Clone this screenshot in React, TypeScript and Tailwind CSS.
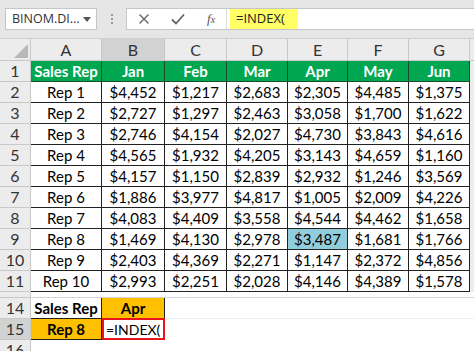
import React from "react";

const cols = [
  { k: "A", w: "w-[71px]" },
  { k: "B", w: "w-[63px]" },
  { k: "C", w: "w-[62px]" },
  { k: "D", w: "w-[61px]" },
  { k: "E", w: "w-[60px]" },
  { k: "F", w: "w-[61px]" },
  { k: "G", w: "w-[61px]" },
];

const data: string[][] = [
  ["Rep 1", "$4,452", "$1,217", "$2,683", "$2,305", "$4,485", "$1,375"],
  ["Rep 2", "$2,727", "$1,297", "$2,463", "$3,058", "$1,700", "$1,622"],
  ["Rep 3", "$2,746", "$4,154", "$2,027", "$4,730", "$3,843", "$4,616"],
  ["Rep 4", "$4,565", "$1,932", "$4,205", "$3,143", "$4,659", "$1,160"],
  ["Rep 5", "$4,157", "$1,150", "$2,839", "$2,932", "$1,246", "$3,569"],
  ["Rep 6", "$1,886", "$3,977", "$4,817", "$1,005", "$2,009", "$4,226"],
  ["Rep 7", "$4,083", "$4,409", "$3,558", "$4,544", "$4,462", "$1,658"],
  ["Rep 8", "$1,469", "$4,130", "$2,978", "$3,487", "$1,681", "$1,766"],
  ["Rep 9", "$2,403", "$4,369", "$2,271", "$1,147", "$2,372", "$4,856"],
  ["Rep 10", "$2,993", "$2,251", "$2,028", "$4,146", "$4,389", "$1,578"],
];

const headers = ["Sales Rep", "Jan", "Feb", "Mar", "Apr", "May", "Jun"];

function RowHead({ n, sel }: { n: string; sel?: boolean }) {
  return (
    <div
      className={`w-[31px] shrink-0 flex items-center justify-center border-r border-b border-[#c8c8c8] text-[16px] text-[#333] whitespace-nowrap ${
        sel ? "bg-[#d2d2d2]" : "bg-[#ececec]"
      }`}
    >
      {n}
    </div>
  );
}

export default function App() {
  return (
    <div
      className="w-[474px] h-[351px] overflow-hidden bg-white text-black"
      style={{ fontFamily: "Lato, 'Open Sans', sans-serif" }}
    >
      {/* Formula bar */}
      <div className="h-[39px] bg-[#e6e6e6] flex items-center border-b border-[#d0d0d0]">
        <div className="ml-[5px] w-[92px] h-[22px] bg-white border border-[#c6c6c6] flex items-center justify-between pl-[6px] pr-[5px]">
          <span
            className="text-[12.5px] text-[#333]"
            style={{ fontFamily: "'Open Sans', sans-serif" }}
          >
            BINOM.DI...
          </span>
          <svg width="8" height="5" viewBox="0 0 8 5">
            <path d="M0 0 L8 0 L4 5 Z" fill="#555" />
          </svg>
        </div>
        <div className="w-[29px] flex flex-col items-center gap-[2px]">
          <span className="w-[2px] h-[2px] bg-[#999]" />
          <span className="w-[2px] h-[2px] bg-[#999]" />
          <span className="w-[2px] h-[2px] bg-[#999]" />
        </div>
        <div className="flex-1 h-[22px] bg-white border-y border-l border-[#c6c6c6] flex items-center">
          <div className="w-[100px] h-full flex items-center justify-around border-r border-[#dedede]">
            <svg width="12" height="12" viewBox="0 0 12 12">
              <path d="M1.5 1.5 L10.5 10.5 M10.5 1.5 L1.5 10.5" stroke="#666" strokeWidth="1.4" />
            </svg>
            <svg width="14" height="12" viewBox="0 0 14 12">
              <path d="M1 6.5 L5 10.5 L13 1.5" stroke="#666" strokeWidth="1.8" fill="none" />
            </svg>
            <span
              className="text-[13px] text-[#555] italic"
              style={{ fontFamily: "'Liberation Serif', serif" }}
            >
              f<span className="text-[10px]">x</span>
            </span>
          </div>
          <div
            className="ml-[3px] h-full w-[68px] bg-[#ffff66] flex items-center pl-[6px] text-[13px] text-[#222]"
            style={{ fontFamily: "'Open Sans', sans-serif" }}
          >
            =INDEX(
          </div>
        </div>
      </div>

      {/* Column headers */}
      <div className="flex h-[22px] bg-[#ececec]">
        <div className="w-[31px] shrink-0 border-r border-b border-[#c8c8c8] relative">
          <svg className="absolute right-[2px] bottom-[2px]" width="14" height="14" viewBox="0 0 14 14">
            <path d="M14 0 L14 14 L0 14 Z" fill="#b8b8b8" />
          </svg>
        </div>
        {cols.map((c) => (
          <div
            key={c.k}
            className={`${c.w} shrink-0 flex items-center justify-center border-r border-b border-[#c8c8c8] text-[16px] text-[#333] ${
              c.k === "B" ? "bg-[#d2d2d2]" : ""
            }`}
          >
            {c.k}
          </div>
        ))}
        <div className="flex-1 border-b border-[#c8c8c8]" />
      </div>

      {/* Row 1 */}
      <div className="flex h-[21px]">
        <RowHead n="1" />
        {cols.map((c, i) => (
          <div
            key={c.k}
            className={`${c.w} shrink-0 flex items-center justify-center whitespace-nowrap bg-[#00a650] text-white font-bold text-[15px] border-r border-b border-[#1a4d2e]`}
          >
            {headers[i]}
          </div>
        ))}
        <div className="flex-1 bg-[#ececec]" />
      </div>

      {data.map((row, r) => (
        <div key={r} className="flex h-[21px]">
          <RowHead n={String(r + 2)} />
          {cols.map((c, i) => (
            <div
              key={c.k}
              className={`${c.w} shrink-0 flex items-center justify-center whitespace-nowrap text-[15px] border-r border-b border-[#222] ${
                r === 7 && i === 4 ? "bg-[#92cddc]" : "bg-white"
              }`}
            >
              {row[i]}
            </div>
          ))}
          <div className="flex-1 bg-[#ececec]" />
        </div>
      ))}

      {/* hidden rows separator */}
      <div className="flex h-[6px]">
        <div className="w-[31px] shrink-0 bg-[#ececec] border-r border-b border-[#c8c8c8]" />
        <div className="flex-1 border-b border-[#d4d4d4]" />
      </div>

      {/* Row 14 */}
      <div className="flex h-[21px]">
        <RowHead n="14" />
        <div className="w-[71px] shrink-0 flex items-center justify-center whitespace-nowrap font-bold text-[15px] border-r border-b border-[#222] bg-white">
          Sales Rep
        </div>
        <div className="w-[63px] shrink-0 flex items-center justify-center font-bold text-[15px] border-r border-b border-[#222] bg-[#ffc000]">
          Apr
        </div>
        <div className="flex-1 border-b border-[#f0f0f0]" />
      </div>

      {/* Row 15 */}
      <div className="flex h-[21px]">
        <RowHead n="15" sel />
        <div className="w-[71px] shrink-0 flex items-center justify-center font-bold text-[15px] border-r border-b border-[#222] bg-[#ffc000]">
          Rep 8
        </div>
        <div className="w-[63px] shrink-0 flex items-center whitespace-nowrap pl-[2px] text-[14px] border-2 border-[#e8141e] bg-white -mt-[1px] h-[22px]">
          =INDEX(
        </div>
        <div className="flex-1" />
      </div>

      {/* Row 16 */}
      <div className="flex h-[21px]">
        <RowHead n="16" />
        <div className="flex-1" />
      </div>
    </div>
  );
}
